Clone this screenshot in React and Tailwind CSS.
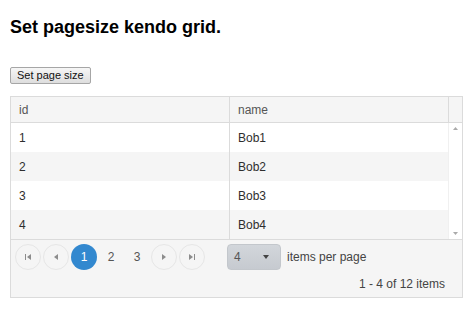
import React from 'react';

const rows = [
  { id: 1, name: 'Bob1' },
  { id: 2, name: 'Bob2' },
  { id: 3, name: 'Bob3' },
  { id: 4, name: 'Bob4' },
];

function NavButton({ children }) {
  return (
    <span className="w-[26px] h-[26px] rounded-full border border-[#e6e6e6] flex items-center justify-center text-[#8c8c8c]">
      {children}
    </span>
  );
}

function Tri({ dir = 'right' }) {
  return (
    <svg width="4" height="6" viewBox="0 0 4 6">
      {dir === 'right' ? <path d="M0 0L4 3L0 6Z" fill="currentColor" /> : <path d="M4 0L0 3L4 6Z" fill="currentColor" />}
    </svg>
  );
}

export default function App() {
  return (
    <div className="w-[474px] h-[315px] bg-white font-['Liberation_Sans',Arial,sans-serif] text-[#2e2e2e] overflow-hidden">
      <h3 className="pt-[17px] pl-[10px] text-[18px] font-bold text-black leading-[21px]">Set pagesize kendo grid.</h3>

      <div className="pl-[10px] mt-[24px]">
        <button className="h-[17px] px-[6px] text-[11px] leading-[15px] text-[#111] bg-[#ececec] border border-[#a6a6a6] rounded-[2px] bg-gradient-to-b from-[#f6f6f6] to-[#dedede]">
          Set page size
        </button>
      </div>

      {/* Grid */}
      <div className="ml-[10px] mt-[10px] w-[453px] border border-[#dbdbdb] text-[12px]">
        <div className="flex h-[26px] bg-[#f5f5f5] border-b border-[#dbdbdb]">
          <div className="w-[219px] border-r border-[#dbdbdb] pl-[8px] flex items-center text-[#555]">id</div>
          <div className="w-[219px] border-r border-[#dbdbdb] pl-[8px] flex items-center text-[#555]">name</div>
          <div className="flex-1" />
        </div>
        <div className="flex">
          <div className="flex-1">
            {rows.map((r, i) => (
              <div key={r.id} className={`flex h-[29px] ${i % 2 ? 'bg-[#f5f5f5]' : 'bg-white'}`}>
                <div className="w-[219px] border-r border-[#dbdbdb] pl-[8px] flex items-center">{r.id}</div>
                <div className="flex-1 pl-[8px] flex items-center">{r.name}</div>
              </div>
            ))}
          </div>
          <div className="w-[14px] bg-white border-l border-[#f0f0f0] flex flex-col justify-between items-center py-[4px] text-[#aaa]">
            <svg width="5" height="3" viewBox="0 0 5 3"><path d="M0 3L2.5 0L5 3Z" fill="currentColor" /></svg>
            <svg width="5" height="3" viewBox="0 0 5 3"><path d="M0 0L2.5 3L5 0Z" fill="currentColor" /></svg>
          </div>
        </div>

        {/* Pager */}
        <div className="bg-[#f5f5f5] border-t border-[#dbdbdb] h-[58px] pl-[4px] pr-[17px] pt-[4px]">
          <div className="flex items-center h-[26px]">
            <div className="flex items-center gap-[2px]">
              <NavButton>
                <svg width="6" height="6" viewBox="0 0 6 6"><path d="M0 0H1V6H0Z M6 0L2 3L6 6Z" fill="currentColor" /></svg>
              </NavButton>
              <NavButton><Tri dir="left" /></NavButton>
              <span className="w-[26px] h-[26px] rounded-full bg-[#3288cf] text-white flex items-center justify-center">1</span>
              <span className="w-[24px] h-[26px] flex items-center justify-center text-[#555]">2</span>
              <span className="w-[24px] h-[26px] flex items-center justify-center text-[#555]">3</span>
              <NavButton><Tri /></NavButton>
              <NavButton>
                <svg width="6" height="6" viewBox="0 0 6 6"><path d="M0 0L4 3L0 6Z M5 0H6V6H5Z" fill="currentColor" /></svg>
              </NavButton>
            </div>
            <div className="ml-[22px] w-[54px] h-[26px] rounded-[4px] border border-[#c3c7cc] bg-gradient-to-b from-[#d2d6db] to-[#c6cad0] flex items-center justify-between pl-[6px] pr-[11px] text-[#555]">
              <span>4</span>
              <svg width="6" height="4" viewBox="0 0 6 4"><path d="M0 0L3 4L6 0Z" fill="#444" /></svg>
            </div>
            <span className="ml-[6px] text-[#444]">items per page</span>
          </div>
          <div className="text-right mt-[5px] text-[#444]">1 - 4 of 12 items</div>
        </div>
      </div>
    </div>
  );
}
